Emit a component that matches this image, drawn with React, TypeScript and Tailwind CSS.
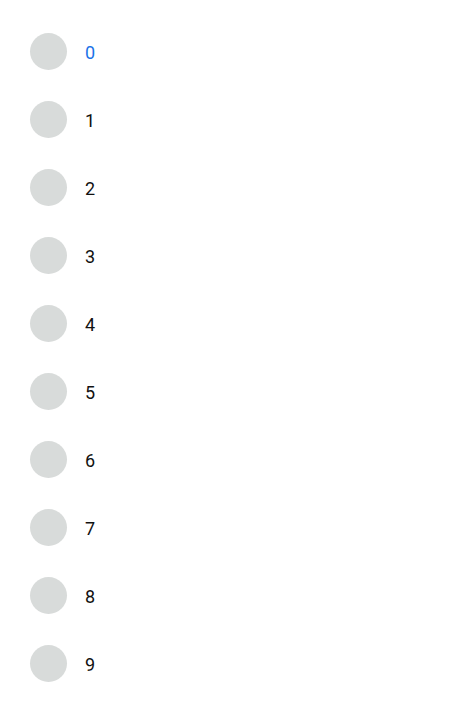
import React from 'react';

const items = [0, 1, 2, 3, 4, 5, 6, 7, 8, 9];

export default function App() {
  return (
    <div className="min-h-screen bg-white pt-[17px] pl-[30px] font-['Roboto',sans-serif]">
      {items.map((n) => (
        <div key={n} className="flex h-[68px] items-center gap-[18px]">
          <div className="h-[37px] w-[37px] shrink-0 rounded-full bg-[#d8dbda]" />
          <span
            className={`pt-[3px] text-[18px] leading-6 ${
              n === 0 ? 'text-[#1a73e8]' : 'text-[#111111]'
            }`}
          >
            {n}
          </span>
        </div>
      ))}
    </div>
  );
}
